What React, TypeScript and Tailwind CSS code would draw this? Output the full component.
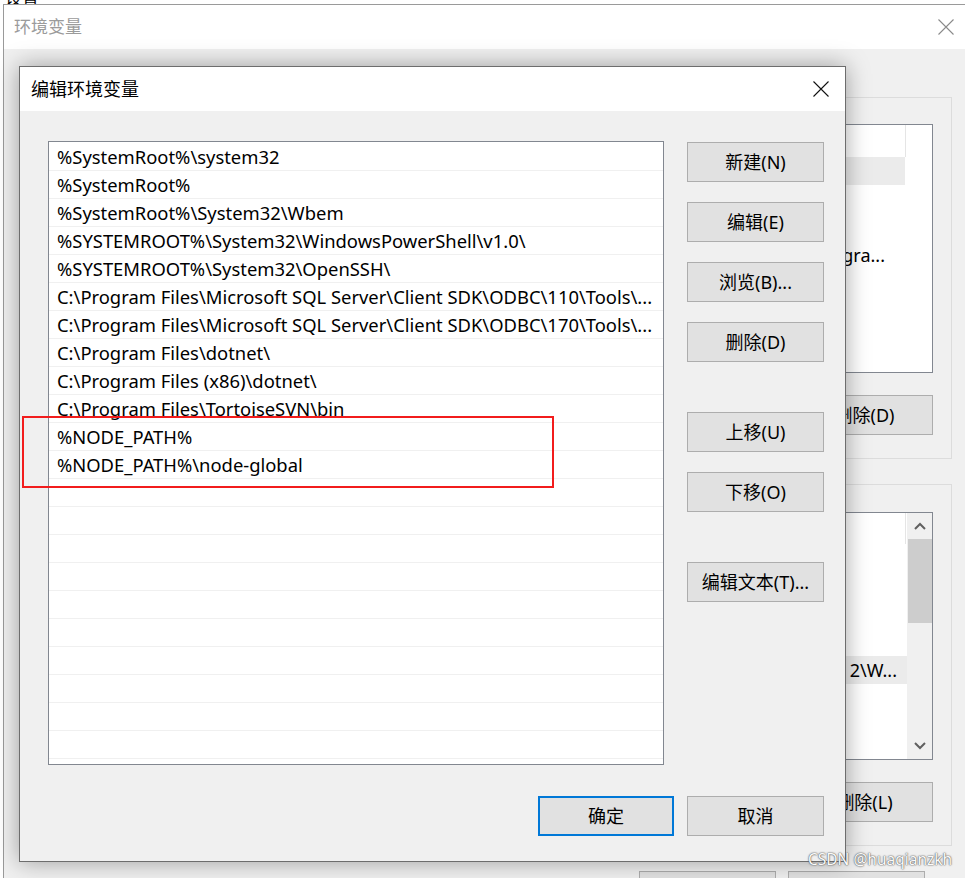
import React from 'react';

const paths: string[] = [
  '%SystemRoot%\\system32',
  '%SystemRoot%',
  '%SystemRoot%\\System32\\Wbem',
  '%SYSTEMROOT%\\System32\\WindowsPowerShell\\v1.0\\',
  '%SYSTEMROOT%\\System32\\OpenSSH\\',
  'C:\\Program Files\\Microsoft SQL Server\\Client SDK\\ODBC\\110\\Tools\\...',
  'C:\\Program Files\\Microsoft SQL Server\\Client SDK\\ODBC\\170\\Tools\\...',
  'C:\\Program Files\\dotnet\\',
  'C:\\Program Files (x86)\\dotnet\\',
  'C:\\Program Files\\TortoiseSVN\\bin',
  '%NODE_PATH%',
  '%NODE_PATH%\\node-global',
];

const sideButtons: { label: string; gap: string }[] = [
  { label: '新建(N)', gap: 'mt-[1px]' },
  { label: '编辑(E)', gap: 'mt-[20px]' },
  { label: '浏览(B)...', gap: 'mt-[20px]' },
  { label: '删除(D)', gap: 'mt-[20px]' },
  { label: '上移(U)', gap: 'mt-[50px]' },
  { label: '下移(O)', gap: 'mt-[20px]' },
  { label: '编辑文本(T)...', gap: 'mt-[50px]' },
];

const CloseIcon = ({ color }: { color: string }) => (
  <svg width="16" height="16" viewBox="0 0 16 16">
    <path d="M0.5 0.5 L15.5 15.5 M15.5 0.5 L0.5 15.5" stroke={color} strokeWidth="1.1" fill="none" />
  </svg>
);

const WinButton = ({ label, className = '' }: { label: string; className?: string }) => (
  <div
    className={`h-[40px] w-[137px] border border-[#adadad] bg-[#e1e1e1] flex items-center justify-center text-[18px] text-black ${className}`}
  >
    {label}
  </div>
);

const Chevron = ({ up }: { up: boolean }) => (
  <svg width="12" height="8" viewBox="0 0 12 8">
    <path
      d={up ? 'M1 7 L6 2 L11 7' : 'M1 1 L6 6 L11 1'}
      stroke="#606060"
      strokeWidth="2"
      fill="none"
    />
  </svg>
);

// window that sits behind the edit dialog
const BackWindow = () => (
  <div className="absolute left-[3px] top-[4px] w-[962px] h-[880px] border-l border-t border-[#9a9a9a] bg-[#f0f0f0] flex flex-col">
    <div className="h-[44px] bg-white flex items-center justify-between pl-[10px] pr-[11px] shrink-0">
      <span className="text-[17px] text-[#9b9b9b]">环境变量</span>
      <CloseIcon color="#8a8a8a" />
    </div>
    <div className="flex flex-col items-end pr-[13px]">
      {/* user variables */}
      <div className="mt-[48px] w-[900px] h-[362px] border border-[#dcdcdc] flex flex-col items-end pr-[18px] pt-[26px]">
        <div className="w-[860px] h-[249px] border border-[#828790] bg-white flex flex-col">
          <div className="h-[32px] flex">
            <div className="flex-1 border-r border-[#e5e5e5]" />
            <div className="w-[26px]" />
          </div>
          <div className="h-[28px] flex">
            <div className="flex-1 bg-[#ebebeb]" />
            <div className="w-[27px]" />
          </div>
          <div className="h-[28px]" />
          <div className="h-[28px]" />
          <div className="h-[28px] flex items-center justify-end pr-[47px] text-[18px] text-black">
            gra...
          </div>
        </div>
        <WinButton label="删除(D)" className="mt-[22px]" />
      </div>
      {/* system variables */}
      <div className="mt-[25px] w-[900px] h-[362px] border border-[#dcdcdc] flex flex-col items-end pr-[18px] pt-[27px]">
        <div className="w-[860px] h-[248px] border border-[#828790] bg-white flex">
          <div className="flex-1 flex flex-col">
            <div className="h-[31px] flex">
              <div className="flex-1 border-r border-[#e5e5e5]" />
              <div className="w-[1px]" />
            </div>
            <div className="h-[28px]" />
            <div className="h-[28px]" />
            <div className="h-[28px]" />
            <div className="h-[28px]" />
            <div className="h-[28px] bg-[#ebebeb] flex items-center justify-end pr-[10px] text-[18px] text-black">
              2\W...
            </div>
          </div>
          <div className="w-[25px] bg-[#f0f0f0] flex flex-col items-center">
            <div className="h-[26px] flex items-center justify-center">
              <Chevron up />
            </div>
            <div className="w-[24px] h-[84px] bg-[#cdcdcd]" />
            <div className="flex-1" />
            <div className="h-[26px] flex items-center justify-center">
              <Chevron up={false} />
            </div>
          </div>
        </div>
        <WinButton label="删除(L)" className="mt-[22px]" />
      </div>
      <div className="mt-[25px] flex gap-[12px] pr-[27px]">
        <WinButton label="" className="h-[40px]" />
        <WinButton label="" className="h-[40px]" />
      </div>
    </div>
  </div>
);

const EditDialog = () => (
  <div className="absolute left-[19px] top-[66px] w-[827px] h-[796px] border border-[#6d6d6d] bg-[#f0f0f0] shadow-[0_0_22px_rgba(0,0,0,0.35)] flex flex-col">
    <div className="h-[44px] bg-white flex items-center justify-between pl-[11px] pr-[16px] shrink-0">
      <span className="text-[18px] text-black">编辑环境变量</span>
      <CloseIcon color="#111111" />
    </div>
    <div className="flex pl-[28px] pr-[21px] pt-[30px]">
      <div className="w-[616px] h-[624px] border border-[#828790] bg-white overflow-hidden pt-[1px]">
        {Array.from({ length: 22 }).map((_, i) => (
          <div
            key={i}
            className="h-[28px] border-b border-[#f0f0f0] flex items-center pl-[8px] pr-[2px] text-[18.4px] text-black whitespace-nowrap"
          >
            {paths[i] ?? ''}
          </div>
        ))}
      </div>
      <div className="ml-[23px] flex flex-col">
        {sideButtons.map((b) => (
          <WinButton key={b.label} label={b.label} className={b.gap} />
        ))}
      </div>
    </div>
    <div className="flex justify-end gap-[13px] pr-[21px] mt-[31px]">
      <div className="h-[40px] w-[136px] border-2 border-[#0078d7] bg-[#e1e1e1] flex items-center justify-center text-[18px] text-black">
        确定
      </div>
      <WinButton label="取消" />
    </div>
  </div>
);

export default function App() {
  return (
    <div className="relative w-[965px] h-[878px] overflow-hidden bg-white font-['Noto_Sans','Noto_Sans_CJK_SC',sans-serif]">
      <div className="absolute left-[5px] top-[-15px] text-[17px] text-black">设置</div>
      <BackWindow />
      <EditDialog />
      {/* highlight drawn over the list */}
      <div className="absolute left-[22px] top-[416px] w-[532px] h-[72px] border-2 border-[#f21c1c]" />
      <div className="absolute left-[808px] top-[848px] text-[15.5px] text-[#fafafa] [text-shadow:0_0_2px_#505050,0_0_1px_#505050]">
        CSDN @huaqianzkh
      </div>
    </div>
  );
}
